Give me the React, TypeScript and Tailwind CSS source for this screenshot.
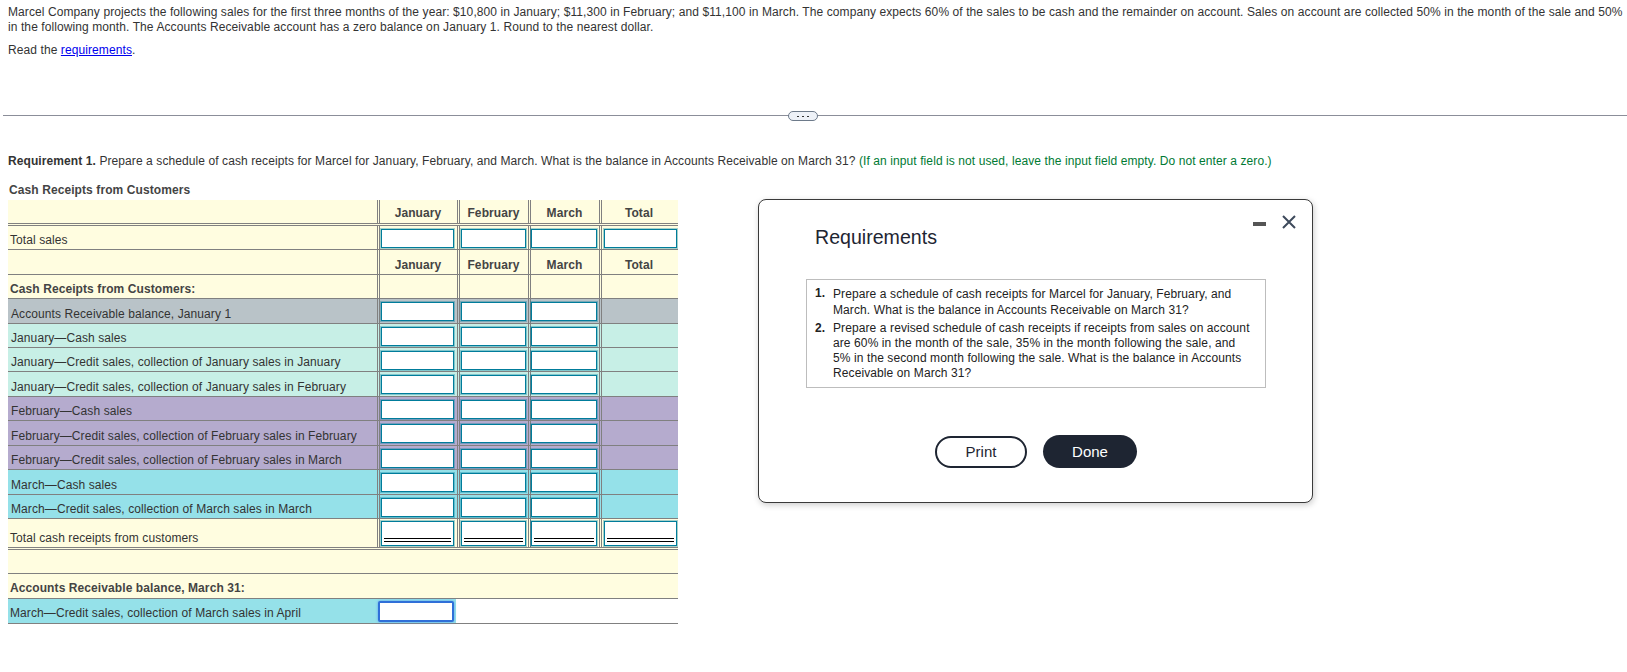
import React from "react";

const vline = "border-l-[3px] border-double border-[#808080]";

function Input({ w, h = "h-[19px] mt-[1px]", total = false }: { w: string; h?: string; total?: boolean }) {
  return (
    <div className={`${w} ${h} bg-white border border-[#007c9b] shadow-[0_0_0_1px_rgba(0,124,155,0.35)] relative`}>
      {total && <div className="absolute left-[2px] right-[2px] bottom-[3px] h-[4px] border-y border-black" />}
    </div>
  );
}

function Row({
  label,
  bg,
  h,
  bold = false,
  cells,
  labelPad = "pl-[2px] pt-[5px]",
}: {
  label: string;
  bg: string;
  h: string;
  bold?: boolean;
  cells: React.ReactNode[];
  labelPad?: string;
}) {
  return (
    <div className={`flex ${bg} ${h} border-b border-[#808080]`}>
      <div className={`w-[369px] flex items-center ${labelPad} ${bold ? "font-bold text-[#444]" : ""}`}>{label}</div>
      {cells}
    </div>
  );
}

const c1 = "w-[80px] flex items-center pl-[1px] " + vline;
const c2 = "w-[71px] flex items-center pl-[1px] " + vline;
const c3 = "w-[71px] flex items-center " + vline;
const c4 = "w-[79px] flex items-center pl-[2px] " + vline;

function InputCells() {
  return [
    <div key="a" className={c1}><Input w="w-[73px]" /></div>,
    <div key="b" className={c2}><Input w="w-[65px]" /></div>,
    <div key="c" className={c3}><Input w="w-[66px]" /></div>,
    <div key="d" className={c4} />,
  ];
}

function HeadCells(pad: string) {
  const right = ["pr-[2px]", "pr-[2px]", "pr-[1px]", "pr-[4px]"];
  return ["January", "February", "March", "Total"].map((m, i) => (
    <div key={m} className={`${[c1, c2, c3, c4][i]} justify-center font-bold text-[#444] ${pad} ${right[i]}`}>{m}</div>
  ));
}

function EmptyCells() {
  return [c1, c2, c3, c4].map((c) => <div key={c} className={c} />);
}

function BodyRow({ label, bg, tall = false }: { label: string; bg: string; tall?: boolean }) {
  return (
    <Row
      label={label}
      bg={bg}
      h={tall ? "h-[25px]" : "h-[24px]"}
      labelPad={tall ? "pl-[3px] pt-[7px]" : "pl-[3px] pt-[5px]"}
      cells={InputCells()}
    />
  );
}

export default function App() {
  return (
    <div className="relative min-h-[672px] overflow-hidden bg-white text-[12px] leading-[15px] text-[#333] font-['Liberation_Sans',Arial,sans-serif] tracking-[0.09px]">
      <div className="pl-[8px] pt-[5px] whitespace-nowrap">
        <p>Marcel Company projects the following sales for the first three months of the year: $10,800 in January; $11,300 in February; and $11,100 in March. The company expects 60% of the sales to be cash and the remainder on account. Sales on account are collected 50% in the month of the sale and 50%</p>
        <p>in the following month. The Accounts Receivable account has a zero balance on January 1. Round to the nearest dollar.</p>
        <p className="mt-[8px]">
          Read the <a className="text-[#0000ee] underline">requirements</a>.
        </p>
      </div>

      <div className="relative mt-[57px] ml-[3px] h-[1px] bg-[#8b8e99]">
        <div className="absolute left-[785px] top-[-4px] w-[30px] h-[10px] rounded-[5px] border border-[#6d7a8a] bg-[#eef2f8] flex items-center justify-center gap-[3px]">
          <span className="w-[2px] h-[1px] bg-[#333]" />
          <span className="w-[2px] h-[1px] bg-[#333]" />
          <span className="w-[2px] h-[1px] bg-[#333]" />
        </div>
      </div>

      <div className="pl-[8px] mt-[38px]">
        <p className="whitespace-nowrap">
          <b>Requirement 1.</b> Prepare a schedule of cash receipts for Marcel for January, February, and March. What is the balance in Accounts Receivable on March 31?{" "}
          <span className="text-[#007a33]">(If an input field is not used, leave the input field empty. Do not enter a zero.)</span>
        </p>
        <p className="mt-[14px] pl-[1px] font-bold text-[#444]">Cash Receipts from Customers</p>

        <div className="mt-[2px] w-[670px]">
          <div className="flex bg-[#fffde0] h-[26px] border-b-[3px] border-double border-[#808080]">
            <div className="w-[369px]" />
            {HeadCells("pt-[4px]")}
          </div>
          <Row label="Total sales" bg="bg-[#fffde0]" h="h-[24px]" cells={[
            <div key="a" className={c1}><Input w="w-[73px]" /></div>,
            <div key="b" className={c2}><Input w="w-[65px]" /></div>,
            <div key="c" className={c3}><Input w="w-[66px]" /></div>,
            <div key="d" className={c4}><Input w="w-[73px]" /></div>,
          ]} />
          <Row label="" bg="bg-[#fffde0]" h="h-[25px]" cells={HeadCells("pt-[6px]")} />
          <Row label="Cash Receipts from Customers:" bg="bg-[#fffde0]" h="h-[24px]" bold labelPad="pl-[2px] pt-[6px]" cells={EmptyCells()} />
          <BodyRow label="Accounts Receivable balance, January 1" bg="bg-[#b9c3c8]" tall />
          <BodyRow label="January—Cash sales" bg="bg-[#c7efe6]" />
          <BodyRow label="January—Credit sales, collection of January sales in January" bg="bg-[#c7efe6]" />
          <BodyRow label="January—Credit sales, collection of January sales in February" bg="bg-[#c7efe6]" tall />
          <BodyRow label="February—Cash sales" bg="bg-[#b5abce]" />
          <BodyRow label="February—Credit sales, collection of February sales in February" bg="bg-[#b5abce]" tall />
          <BodyRow label="February—Credit sales, collection of February sales in March" bg="bg-[#b5abce]" />
          <BodyRow label="March—Cash sales" bg="bg-[#95e1e9]" tall />
          <BodyRow label="March—Credit sales, collection of March sales in March" bg="bg-[#95e1e9]" />
          <div className="flex bg-[#fffde0] h-[31px] border-b-[3px] border-double border-[#808080]">
            <div className="w-[369px] flex items-center pl-[2px] pt-[10px]">Total cash receipts from customers</div>
            {[c1, c2, c3, c4].map((c, i) => (
              <div key={c} className={c}>
                <Input h="h-[25px]" total w={["w-[73px]", "w-[65px]", "w-[66px]", "w-[73px]"][i]} />
              </div>
            ))}
          </div>
          <div className="bg-[#fffde0] h-[24px] border-b border-[#808080]" />
          <div className="bg-[#fffde0] h-[25px] border-b border-[#808080] flex items-center pl-[2px] pt-[4px] font-bold text-[#444]">Accounts Receivable balance, March 31:</div>
          <div className="flex h-[25px] border-b border-[#808080]">
            <div className="w-[448px] bg-[#95e1e9] flex">
              <div className="w-[369px] flex items-center pl-[2px] pt-[4px]">March—Credit sales, collection of March sales in April</div>
              <div className="ml-[1px] mt-[2px] w-[76px] h-[21px] bg-white border-2 border-[#2f6fd8] rounded-[2px] shadow-[0_0_3px_#5aa0ee]" />
            </div>
          </div>
        </div>
      </div>

      <div className="absolute left-[758px] top-[199px] w-[555px] h-[304px] bg-white border border-[#3a3a3a] rounded-[8px] shadow-[1px_2px_6px_rgba(0,0,0,0.2)]">
        <h2 className="absolute left-[56px] top-[24px] text-[19.6px] leading-[26px] text-[#1e2532] tracking-normal">Requirements</h2>
        <div className="absolute left-[494px] top-[22px] w-[13px] h-[4px] bg-[#555]" />
        <svg className="absolute left-[522px] top-[14px]" width="16" height="16" viewBox="0 0 16 16" fill="none" stroke="#3e4a5c" strokeWidth="2">
          <path d="M2 2 L14 14 M14 2 L2 14" />
        </svg>
        <div className="absolute left-[47px] top-[79px] w-[460px] h-[109px] border border-[#bdbdbd] text-[#222] tracking-[0.1px]">
          <div className="pt-[6px] pl-[8px]">
            <div className="flex mb-[3px]"><b className="w-[18px]">1.</b><span className="leading-[16px]">Prepare a schedule of cash receipts for Marcel for January, February, and<br />March. What is the balance in Accounts Receivable on March 31?</span></div>
            <div className="flex"><b className="w-[18px]">2.</b><span>Prepare a revised schedule of cash receipts if receipts from sales on account<br />are 60% in the month of the sale, 35% in the month following the sale, and<br />5% in the second month following the sale. What is the balance in Accounts<br />Receivable on March 31?</span></div>
          </div>
        </div>
        <div className="absolute left-[176px] top-[235px] flex items-center gap-[16px] tracking-normal">
          <button className="w-[92px] h-[32px] pb-[1px] rounded-full border-2 border-[#1e2532] text-[15px] text-[#1e2532] bg-white">Print</button>
          <button className="w-[94px] h-[33px] pb-[1px] rounded-full bg-[#1e2532] text-[15px] text-white">Done</button>
        </div>
      </div>
    </div>
  );
}
